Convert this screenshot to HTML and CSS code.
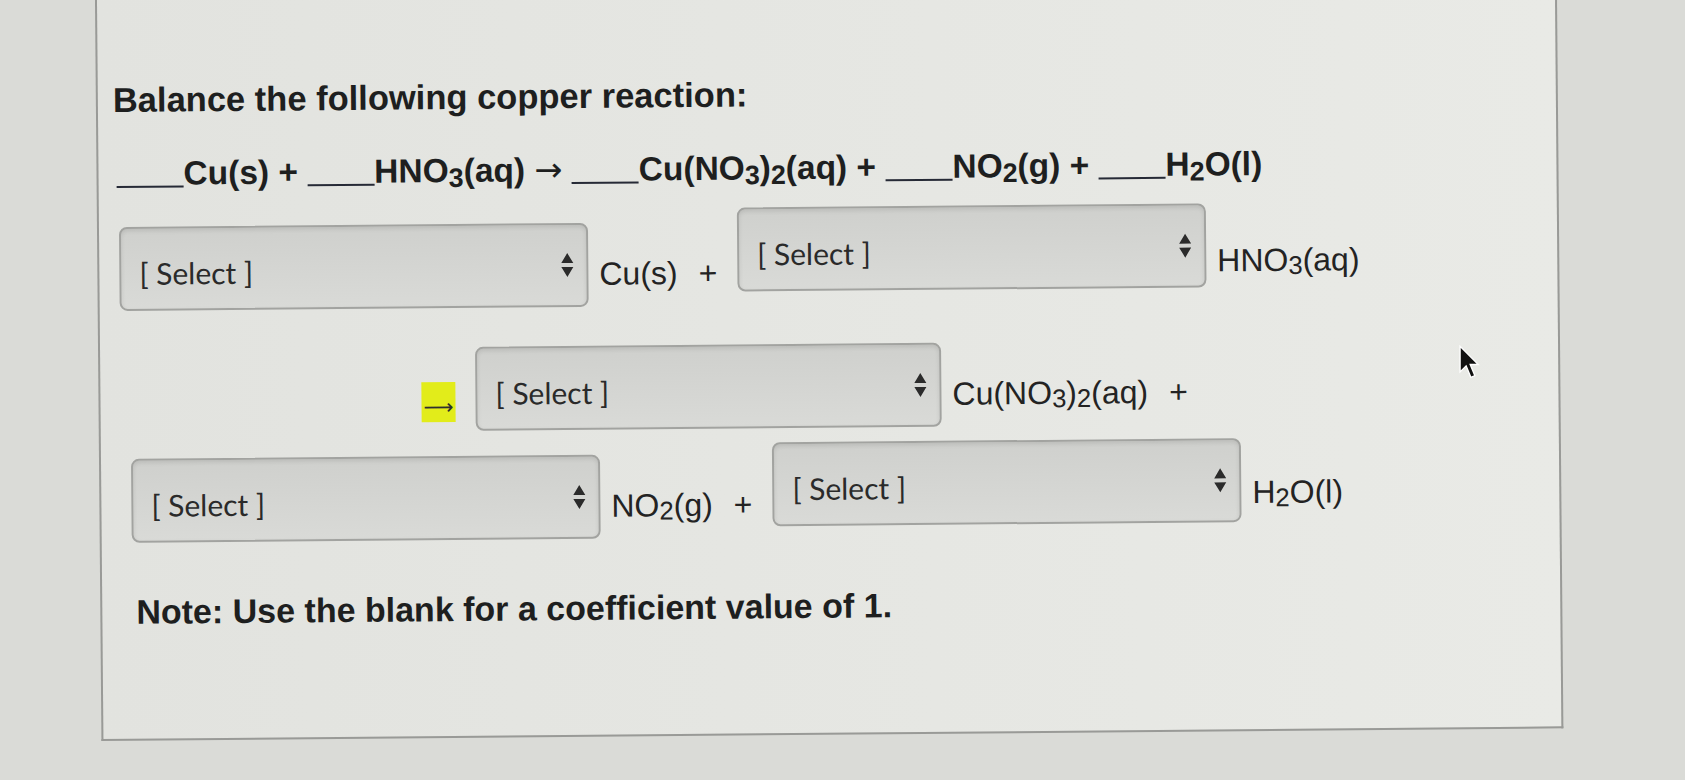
FILE: index.html
```html
<!DOCTYPE html>
<html lang="en">
<head>
    <meta charset="UTF-8">
    <meta name="viewport" content="width=device-width, initial-scale=1.0">
    <title>Balance the following copper reaction</title>
    <link rel="stylesheet" href="styles.css">
</head>
<body>
    <div class="panel">
        <p class="question">Balance the following copper reaction:</p>

        <p class="equation"><span class="blank"></span>Cu(s) + <span class="blank"></span>HNO<sub>3</sub>(aq) <span class="yields">→</span> <span class="blank"></span>Cu(NO<sub>3</sub>)<sub>2</sub>(aq) + <span class="blank"></span>NO<sub>2</sub>(g) + <span class="blank"></span>H<sub>2</sub>O(l)</p>

        <div class="row row-1">
            <div class="term">
                <div class="select">
                    <span class="select-text">[ Select ]</span>
                    <svg class="arrows" viewBox="0 0 14 26"><path d="M7 1 L13 11 H1 Z M1 15 H13 L7 25 Z"/></svg>
                </div>
                <span class="label">Cu(s)<span class="plus">+</span></span>
            </div>
            <div class="term">
                <div class="select">
                    <span class="select-text">[ Select ]</span>
                    <svg class="arrows" viewBox="0 0 14 26"><path d="M7 1 L13 11 H1 Z M1 15 H13 L7 25 Z"/></svg>
                </div>
                <span class="label">HNO<sub>3</sub>(aq)</span>
            </div>
        </div>

        <div class="row row-2">
            <span class="flag">⟶</span>
            <div class="term">
                <div class="select select-narrow">
                    <span class="select-text">[ Select ]</span>
                    <svg class="arrows" viewBox="0 0 14 26"><path d="M7 1 L13 11 H1 Z M1 15 H13 L7 25 Z"/></svg>
                </div>
                <span class="label">Cu(NO<sub>3</sub>)<sub>2</sub>(aq)<span class="plus">+</span></span>
            </div>
        </div>

        <div class="row row-3">
            <div class="term">
                <div class="select">
                    <span class="select-text">[ Select ]</span>
                    <svg class="arrows" viewBox="0 0 14 26"><path d="M7 1 L13 11 H1 Z M1 15 H13 L7 25 Z"/></svg>
                </div>
                <span class="label">NO<sub>2</sub>(g)<span class="plus">+</span></span>
            </div>
            <div class="term">
                <div class="select">
                    <span class="select-text">[ Select ]</span>
                    <svg class="arrows" viewBox="0 0 14 26"><path d="M7 1 L13 11 H1 Z M1 15 H13 L7 25 Z"/></svg>
                </div>
                <span class="label">H<sub>2</sub>O(l)</span>
            </div>
        </div>

        <p class="note">Note: Use the blank for a coefficient value of 1.</p>
    </div>

    <!-- mouse pointer left on the screen -->
    <svg class="cursor" viewBox="0 0 16 26"><path d="M1 1 V20 L5.5 15.5 L9 24 L12 22.8 L8.5 14.5 H14.5 Z"/></svg>
</body>
</html>
```

FILE: styles.css
```css
html {
    overflow: hidden;
}

body {
    margin: 0;
    height: 780px;
    display: flow-root;
    background-color: #dadbd7;
    font-family: "Liberation Sans", Arial, sans-serif;
    color: #1e1f1f;
}

/* the quiz box, photographed at a slight tilt */
.panel {
    box-sizing: border-box;
    width: 1462px;
    height: 761px;
    margin: -20px 0 0 96px;
    padding: 100px 0 0 15px;
    background: linear-gradient(90deg, #e2e3df, #e9eae6);
    border: 2px solid #999a97;
    border-top: none;
    transform: rotate(-0.5deg);
    transform-origin: 17px 137px;
}

.question {
    margin: 0;
    font-size: 34.5px;
    line-height: 40px;
    font-weight: bold;
}

.equation {
    margin: 34px 0 0 3px;
    font-size: 33.5px;
    line-height: 40px;
    font-weight: bold;
    white-space: nowrap;
}

.equation sub {
    font-size: 0.8em;
    vertical-align: -0.18em;
    line-height: 0;
}

.yields {
    font-family: "DejaVu Sans", sans-serif;
    font-weight: normal;
}

.blank {
    display: inline-block;
    width: 67px;
    height: 1px;
    margin-bottom: -3px;
    border-bottom: 2px solid #262a36;
}

.row {
    display: flex;
    align-items: flex-start;
}

.row-1 {
    margin: 33px 0 0 5px;
}

.row-2 {
    margin: 39px 0 0 306px;
}

.row-3 {
    margin: 25px 0 0 15px;
}

.term {
    display: flex;
    align-items: flex-start;
}

/* the second dropdown of a line sits a little higher */
.term + .term {
    margin: -14px 0 0 20px;
}

.row-3 .term + .term {
    margin-top: -11px;
}

.term + .term .label {
    margin-top: 37px;
}

.row-3 .term + .term .label {
    margin-top: 34px;
}

.select {
    box-sizing: border-box;
    width: 469px;
    height: 84px;
    display: flex;
    align-items: center;
    justify-content: space-between;
    padding: 0 12px 0 18px;
    border: 2px solid #a2a3a0;
    border-radius: 8px;
    background: linear-gradient(#cfd0cd, #d9dad7);
    box-shadow: inset 0 2px 4px rgba(0, 0, 0, 0.1);
    font-family: Lato, "Liberation Sans", sans-serif;
    font-size: 30px;
    color: #2a2a2a;
}

.select-narrow {
    width: 466px;
}

.select-text {
    margin-top: 8px;
    line-height: 36px;
}

.arrows {
    width: 14px;
    height: 26px;
    fill: #2b2b2b;
}

.label {
    margin: 31px 0 0 11px;
    font-size: 32px;
    line-height: 40px;
    white-space: nowrap;
    color: #232323;
}

.label sub {
    font-size: 0.8em;
    vertical-align: -0.13em;
    line-height: 0;
}

.plus {
    margin-left: 21px;
}

/* highlighted arrow in front of the products */
.flag {
    box-sizing: border-box;
    width: 34px;
    height: 40px;
    margin: 35px 20px 0 0;
    padding-top: 15px;
    background-color: #e2ec1a;
    font-family: "DejaVu Sans", sans-serif;
    font-size: 21px;
    line-height: 21px;
    text-align: center;
    color: #2e2e2e;
}

.note {
    margin: 49px 0 0 19px;
    font-size: 34px;
    line-height: 40px;
    font-weight: bold;
}

.cursor {
    position: absolute;
    left: 1458px;
    top: 345px;
    width: 23px;
    height: 35px;
    fill: #111;
    stroke: #fff;
    stroke-width: 1;
}
```
